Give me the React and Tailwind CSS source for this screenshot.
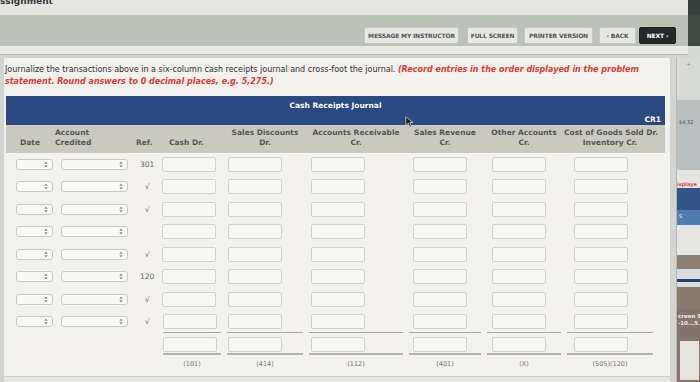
const refs = ['301', '√', '√', '', '√', '120', '√', '√'];

const columns = [
  { key: 'cash', cell: 'w-[64px]', pad: 'pl-[2px]', padU: 'pl-0', head: 'pl-[9px] text-left', label: ['Cash Dr.'], total: '(101)' },
  { key: 'sd', cell: 'w-[82px]', pad: 'pl-[4px]', padU: 'pl-[1px]', head: 'text-center', label: ['Sales Discounts', 'Dr.'], total: '(414)' },
  { key: 'ar', cell: 'w-[100px]', pad: 'pl-[5px]', padU: 'pl-[2px]', head: 'text-center', label: ['Accounts Receivable', 'Cr.'], total: '(112)' },
  { key: 'sr', cell: 'w-[78px]', pad: 'pl-[7px]', padU: 'pl-[4px]', head: 'text-center', label: ['Sales Revenue', 'Cr.'], total: '(401)' },
  { key: 'oa', cell: 'w-[80px]', pad: 'pl-[8px]', padU: 'pl-[5px]', head: 'text-center', label: ['Other Accounts', 'Cr.'], total: '(X)' },
  { key: 'cg', cell: 'w-[92px]', pad: 'pl-[10px]', padU: 'pl-[7px]', head: 'text-center', label: ['Cost of Goods Sold Dr.', 'Inventory Cr.'], total: '(505)(120)' },
];

const Select = ({ className }) => (
  <div className={`flex h-[11px] items-center justify-end rounded-[3px] border border-[#c9c9c4] bg-[#f8f8f5] pr-[4px] ${className}`}>
    <svg viewBox="0 0 6 10" className="h-[7px] w-[4px] text-[#8a8a86]" aria-hidden="true">
      <path d="M3 0.5L5.5 4H0.5z M3 9.5L5.5 6H0.5z" fill="currentColor" />
    </svg>
  </div>
);

const Field = () => (
  <div className="h-[15px] w-[54px] rounded-[2px] border border-[#d0d0cb] bg-[#f6f6f3]" />
);

const Button = ({ children, className, dark }) => (
  <div
    className={`flex h-[17px] items-center justify-center rounded-[2px] border text-[6px] font-bold tracking-tight ${
      dark ? 'border-[#1f2124] bg-[#26282b] text-white' : 'border-[#c5c8c0] bg-[#e6e7e2] text-[#555]'
    } ${className}`}
  >
    {children}
  </div>
);

const RightStrip = () => (
  <div className="flex w-[24px] flex-col overflow-hidden border-l border-[#b5b8b2] text-[5px] leading-none">
    <div className="flex h-[42px] items-start justify-center bg-[#d8dad5] pt-[4px] text-[#7b7f7a]">+</div>
    <div className="h-[70px] bg-[#b9bebf] pl-[2px] pt-[20px] text-[#4d5356]">$4,32</div>
    <div className="flex h-[18px] items-end bg-[#e4e4e1] pb-[1px] font-bold text-[#e0463d]">isplaye</div>
    <div className="h-[22px] bg-[#34548a]" />
    <div className="h-[15px] bg-[#4f7cb0] pl-[2px] pt-[4px] text-white">S</div>
    <div className="h-[30px] bg-[#e5e5e1]" />
    <div className="h-[14px] bg-[#8d7e72]" />
    <div className="h-[18px] bg-[#d9dcdc] pt-[10px]">
      <div className="h-[3px] bg-[#26406a]" />
    </div>
    <div className="h-[22px] bg-[#8a796d]" />
    <div className="h-[22px] whitespace-nowrap bg-[#85746a] pl-[1px] pt-[4px] text-[5.5px] font-bold leading-[7px] text-[#f1ece6]">
      creen Sh
      <br />
      -10...5.0
    </div>
    <div className="flex-1 bg-[#85746a] pb-[2px] pl-[3px] pr-[1px] pt-[10px]">
      <div className="h-full bg-[#e6e4dc]" />
    </div>
  </div>
);

export default function App() {
  return (
    <div className="h-[382px] w-[700px] overflow-hidden bg-[#e2e2df] font-['DejaVu_Sans',Verdana,sans-serif] text-[#333]">
      <div className="flex h-[15px]">
        <div className="flex-1 overflow-hidden bg-[#e4e4e1]">
          <div className="-mt-[4px] text-[9px] font-bold leading-[10px] text-[#3a3a3a]">ssignment</div>
        </div>
        <div className="w-[12px] bg-[#34413c]" />
      </div>

      <div className="flex h-[31px]">
        <div className="flex flex-1 items-end justify-end bg-[#bac2b6] pb-[2px]">
          <Button className="w-[95px]">MESSAGE MY INSTRUCTOR</Button>
          <Button className="ml-[8px] w-[51px]">FULL SCREEN</Button>
          <Button className="ml-[6px] w-[69px]">PRINTER VERSION</Button>
          <Button className="ml-[6px] w-[37px]">‹ BACK</Button>
          <Button className="ml-[3px] w-[37px]" dark>NEXT ›</Button>
          <div className="w-[12px]" />
        </div>
        <div className="w-[12px] bg-[#3c4943]" />
      </div>

      <div className="flex h-[8px]">
        <div className="flex-1 bg-[#e9e9e5]" />
        <div className="w-[12px] bg-[#d6d9d3]" />
      </div>
      <div className="flex h-[4px]">
        <div className="flex-1 border-t border-[#b8bbb4] bg-[#d2d5ce]" />
        <div className="w-[12px] bg-[#d6d9d3]" />
      </div>

      <div className="flex h-[324px]">
        <div className="relative flex w-[676px] flex-col border-l-[4px] border-r-[6px] border-[#d3d3cf] bg-[#f2f1ec]">
          <p className="pl-[1px] pr-[6px] pt-[6px] text-[8px] leading-[11.5px] text-[#2f2f2f]">
            Journalize the transactions above in a six-column cash receipts journal and cross-foot the journal.{' '}
            <span className="font-bold italic text-[#e23b3b]">
              (Record entries in the order displayed in the problem statement. Round answers to 0 decimal places, e.g. 5,275.)
            </span>
          </p>

          <div className="mt-[9px] w-[661px] pl-[2px]">
            <div className="flex h-[29px] flex-col bg-[#2c4a82] text-white">
              <div className="pt-[5px] text-center text-[7.5px] font-bold leading-[9px]">Cash Receipts Journal</div>
              <div className="pr-[4px] pt-[5px] text-right text-[7.5px] font-bold leading-[9px]">CR1</div>
            </div>

            <div className="flex h-[28px] bg-[#c9c9bd] pb-[5px] text-[7.5px] font-bold leading-[10px] text-[#555]">
              <div className="flex w-[48px] items-end justify-center">Date</div>
              <div className="flex w-[78px] flex-col justify-end pl-[1px]">
                <span>Account</span>
                <span>Credited</span>
              </div>
              <div className="flex w-[28px] items-end pl-[4px]">Ref.</div>
              {columns.map((col) => (
                <div key={col.key} className={`flex flex-col justify-end whitespace-nowrap ${col.cell} ${col.head}`}>
                  {col.label.map((line) => (
                    <span key={line}>{line}</span>
                  ))}
                </div>
              ))}
            </div>

            {refs.map((ref, i) => {
              const last = i === refs.length - 1;
              return (
                <div key={i} className="flex h-[22.5px] items-center">
                  <div className="w-[48px] pl-[10px]">
                    <Select className="w-[37px]" />
                  </div>
                  <div className="w-[78px] pl-[7px]">
                    <Select className="w-[67px]" />
                  </div>
                  <div className={`w-[28px] text-[7.5px] text-[#666] ${ref === '√' ? 'pl-[13px]' : 'pl-[8px]'}`}>{ref}</div>
                  {columns.map((col) => (
                    <div key={col.key} className={`h-full ${col.cell}`}>
                      <div
                        className={`flex h-full items-center ${
                          last ? `mx-[3px] border-b border-[#a9a9a4] ${col.padU}` : col.pad
                        }`}
                      >
                        <Field />
                      </div>
                    </div>
                  ))}
                </div>
              );
            })}

            <div className="flex h-[22px] items-center pt-[2px]">
              <div className="w-[154px]" />
              {columns.map((col) => (
                <div key={col.key} className={`h-full ${col.cell}`}>
                  <div className={`mx-[3px] flex h-full items-center border-b-2 border-[#b3b3ad] ${col.padU}`}>
                    <Field />
                  </div>
                </div>
              ))}
            </div>

            <div className="flex pt-[5px] text-[6.5px] leading-[8px] text-[#777]">
              <div className="w-[154px]" />
              {columns.map((col) => (
                <div key={col.key} className={`text-center ${col.cell}`}>
                  {col.total}
                </div>
              ))}
            </div>
          </div>

          <div className="mt-auto h-[6px] border-t border-[#cfcfca] bg-[#e7e7e3]" />

          <svg viewBox="0 0 10 15" className="absolute left-[401px] top-[58px] h-[12px] w-[8px]" aria-hidden="true">
            <path d="M1 1v11l3-3 2 5 2-1-2-5h4z" fill="#1e1e1e" stroke="#e8e8e8" strokeWidth="0.9" />
          </svg>
        </div>
        <RightStrip />
      </div>
    </div>
  );
}
